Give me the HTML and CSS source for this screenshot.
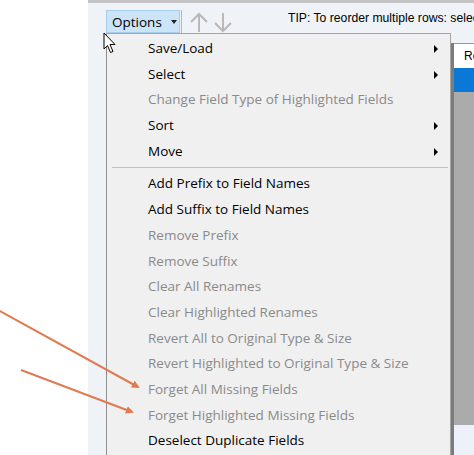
FILE: index.html
```html
<!DOCTYPE html>
<html lang="en">
<head>
    <meta charset="UTF-8">
    <title>Field Options</title>
    <link rel="stylesheet" href="styles.css">
</head>
<body>
 <div class="screen">
  <div class="window">
   <div class="top-strip"></div>
   <div class="toolbar">
    <button class="options-btn">Options<span class="caret"></span></button>
    <span class="tool-sep"></span>
    <svg class="move-arrows" width="46" height="21" viewBox="0 0 46 21">
     <path d="M9 20 V2 M1 10 L9 2 L17 10" fill="none" stroke="#b9b9b9" stroke-width="2"/>
     <path d="M33 1 V19 M25 11 L33 19 L41 11" fill="none" stroke="#b9b9b9" stroke-width="2"/>
    </svg>
    <span class="tip">TIP: To reorder multiple rows: select them and drag</span>
   </div>
   <div class="grid">
    <div class="grid-head"><span>Rename</span></div>
    <div class="grid-row selected"></div>
    <div class="grid-body"></div>
    <div class="grid-foot"></div>
   </div>

   <div class="menu">
    <div class="item sub">Save/Load</div>
    <div class="item sub">Select</div>
    <div class="item off">Change Field Type of Highlighted Fields</div>
    <div class="item sub">Sort</div>
    <div class="item sub">Move</div>
    <div class="sep"></div>
    <div class="item">Add Prefix to Field Names</div>
    <div class="item">Add Suffix to Field Names</div>
    <div class="item off">Remove Prefix</div>
    <div class="item off">Remove Suffix</div>
    <div class="item off">Clear All Renames</div>
    <div class="item off">Clear Highlighted Renames</div>
    <div class="item off">Revert All to Original Type &amp; Size</div>
    <div class="item off">Revert Highlighted to Original Type &amp; Size</div>
    <div class="item off">Forget All Missing Fields</div>
    <div class="item off">Forget Highlighted Missing Fields</div>
    <div class="item">Deselect Duplicate Fields</div>
   </div>
  </div>

  <svg class="cursor" width="14" height="22" viewBox="0 0 14 22">
   <path d="M1 1 L1 17 L4.5 13.5 L7.5 20.5 L10 19.5 L7 12.5 L12 12.5 Z" fill="#fff" stroke="#000" stroke-width="1" stroke-linejoin="round"/>
  </svg>

  <svg class="annot" width="474" height="455" viewBox="0 0 474 455">
   <defs>
    <marker id="head" markerWidth="8" markerHeight="8" refX="6" refY="4" orient="auto" markerUnits="userSpaceOnUse">
     <path d="M0 0 L8 4 L0 8 Z" fill="#e07a50"/>
    </marker>
   </defs>
   <line x1="-2" y1="310" x2="138" y2="387" stroke="#e07a50" stroke-width="2" marker-end="url(#head)"/>
   <line x1="21" y1="370" x2="132" y2="412" stroke="#e07a50" stroke-width="2" marker-end="url(#head)"/>
  </svg>
 </div>
</body>
</html>
```

FILE: styles.css
```css
        body {
            margin: 0;
            background-color: #ffffff;
            font-family: "Open Sans", "Noto Sans", sans-serif;
        }
        .screen {
            position: relative;
            width: 474px;
            height: 455px;
            overflow: hidden;
        }
        .window {
            position: relative;
            margin-left: 88px;
            height: 455px;
            background-color: #eff2f7;
        }
        .top-strip {
            height: 3px;
            background-color: #c4c4c4;
        }
        .toolbar {
            height: 40px;
            display: flex;
            flex-direction: row;
            align-items: flex-start;
            padding-left: 18px;
            box-sizing: border-box;
            padding-top: 7px;
            overflow: hidden;
        }
        .toolbar > * {flex-shrink: 0}
        .options-btn {
            height: 23px;
            width: 74px;
            margin: 0;
            padding: 0 0 0 5px;
            display: flex;
            align-items: center;
            background-color: #cce4f7;
            border: 1px solid #a6cdea;
            font-family: "Open Sans", "Noto Sans", sans-serif;
            font-size: 13.5px;
            color: #000;
            text-align: left;
        }
        .caret {
            margin-left: 9px;
            border-top: 4px solid #222;
            border-left: 3px solid transparent;
            border-right: 3px solid transparent;
        }
        .tool-sep {
            width: 1px;
            height: 23px;
            margin-left: 1px;
            background-color: #b8b8b8;
        }
        .move-arrows {
            margin-left: 8px;
            margin-top: 2px;
        }
        .tip {
            margin-left: 52px;
            margin-top: 1px;
            font-family: "Liberation Sans", Arial, sans-serif;
            font-size: 12.2px;
            white-space: nowrap;
            color: #000;
        }
        .grid {
            margin-left: 363px;
            border-left: 3px solid #7c7c7c;
        }
        .grid-head {
            height: 24px;
            border-top: 1px solid #9a9a9a;
            background-color: #ffffff;
            padding-left: 10px;
            font-family: "Liberation Sans", Arial, sans-serif;
            font-size: 12px;
            line-height: 24px;
            white-space: nowrap;
            overflow: hidden;
        }
        .grid-row.selected {
            height: 24px;
            background-color: #0a78d6;
        }
        .grid-body {
            height: 333px;
            background-color: #ababab;
        }
        .grid-foot {
            height: 40px;
            background-color: #eef0fa;
        }

        .menu {
            position: absolute;
            left: 18px;
            top: 33px;
            width: 345px;
            height: 440px;
            box-sizing: border-box;
            padding-top: 2px;
            background-color: #f0f0f0;
            border: 1px solid #a5a5a5;
            border-left-color: #8e8e8e;
        }
        .item {
            position: relative;
            height: 25.7px;
            line-height: 25.7px;
            padding-left: 41px;
            font-size: 13.5px;
            color: #000;
            white-space: nowrap;
        }
        .item.off {color: #8a8a8a}
        .item.sub::after {
            content: "";
            position: absolute;
            right: 12px;
            top: 9px;
            border-left: 4px solid #000;
            border-top: 4px solid transparent;
            border-bottom: 4px solid transparent;
        }
        .sep {
            height: 7px;
            margin: 0 2px 0 5px;
            background: linear-gradient(#f0f0f0 3px, #c3c3c3 3px, #c3c3c3 4px, #f0f0f0 4px);
        }
        .cursor {
            position: absolute;
            left: 103px;
            top: 32px;
        }
        .annot {
            position: absolute;
            left: 0;
            top: 0;
        }
```
